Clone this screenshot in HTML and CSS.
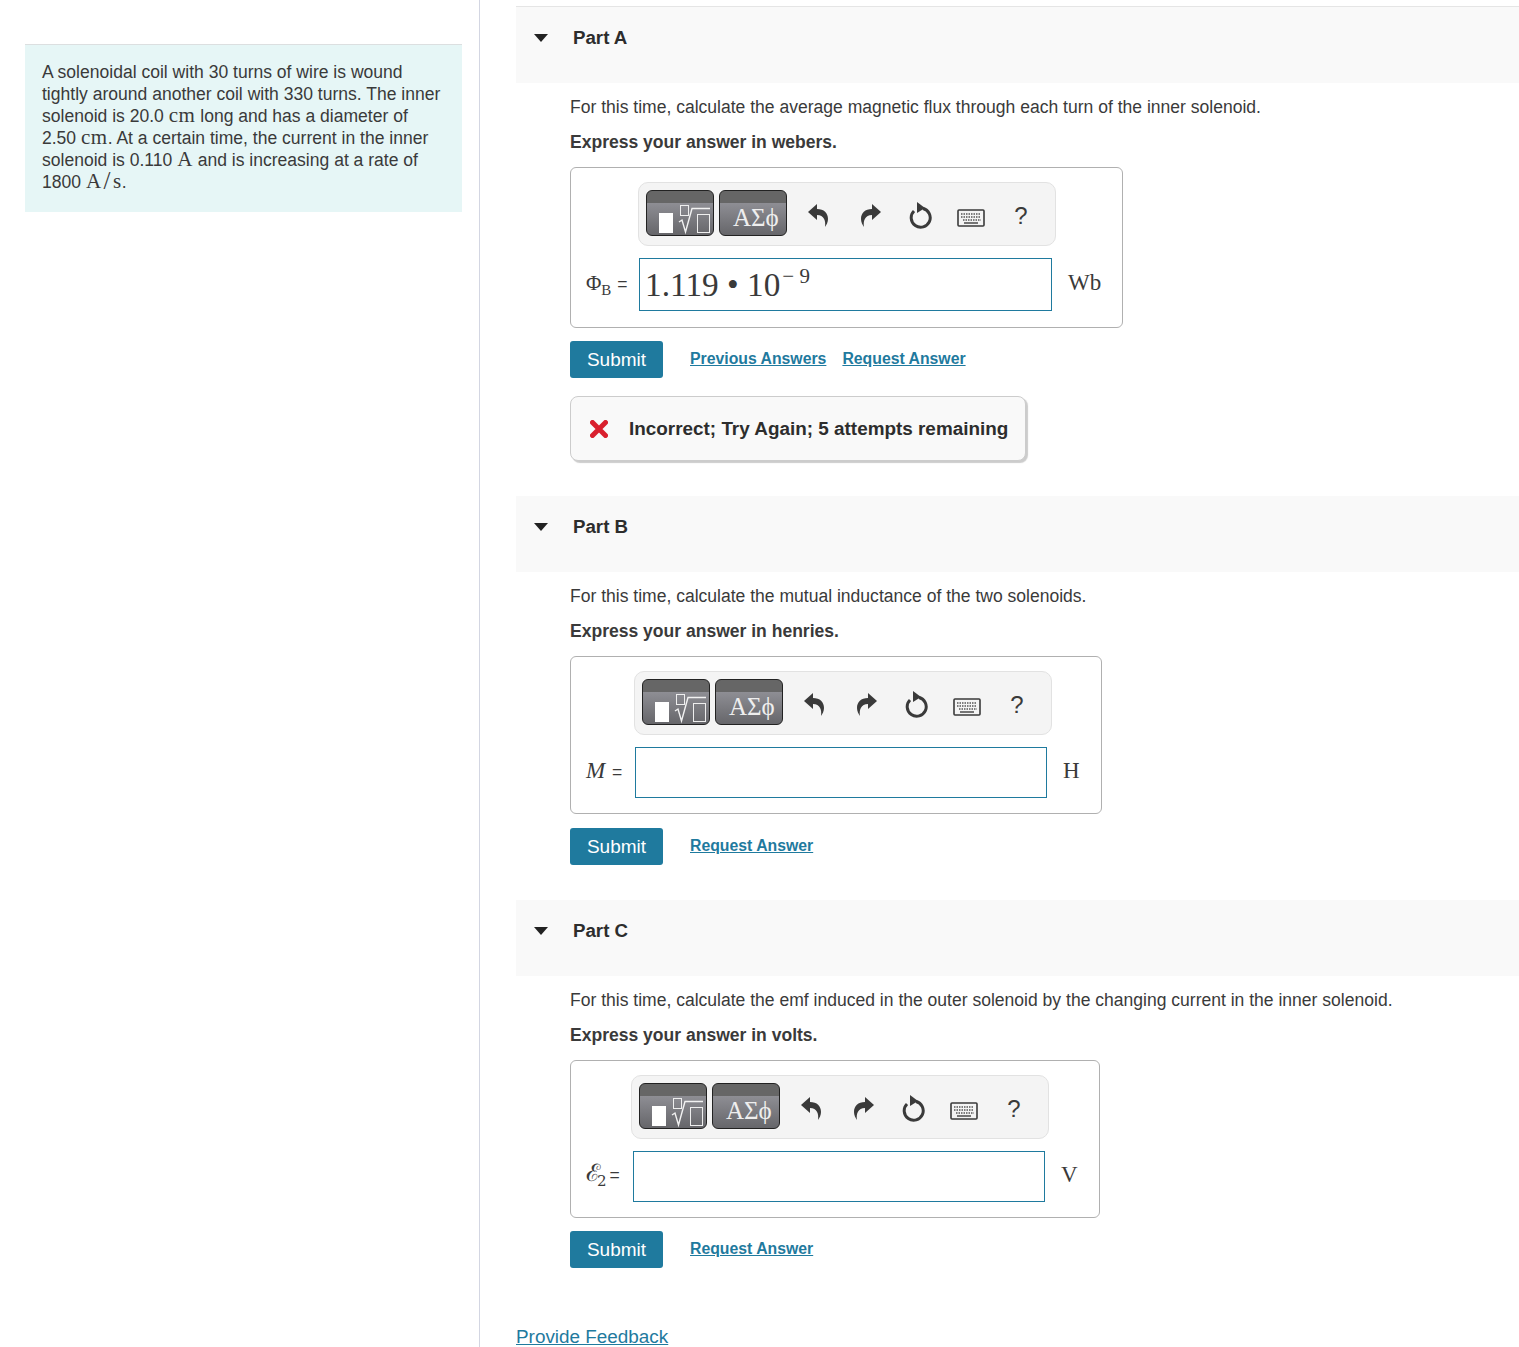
FILE: index.html
```html
<!DOCTYPE html>
<html lang="en">
<head>
    <meta charset="UTF-8">
    <meta name="viewport" content="width=device-width, initial-scale=1.0">
    <title>Solenoid Problem</title>
    <link rel="stylesheet" href="styles.css">
</head>
<body>
    <svg class="icon-defs" aria-hidden="true">
        <symbol id="icon-template" viewBox="0 0 68 46">
            <rect x="13" y="23" width="14" height="20" fill="#fff"/>
            <rect x="34.5" y="15.5" width="8" height="10" fill="none" stroke="#eee"/>
            <path d="M33 32 L36 30 L39.5 42 L46 18.5 H64" fill="none" stroke="#f2f2f2" stroke-width="1.4"/>
            <rect x="51.5" y="24.5" width="12" height="18" fill="none" stroke="#eee"/>
        </symbol>
        <symbol id="icon-undo" viewBox="0 0 20 24">
            <path d="M0 9 L9 1 V6 C16 6 20 10 20 16 C20 19 18.5 22 17 24 C18 18 16 12 9 12 V17 Z" fill="#3a3a3a"/>
        </symbol>
        <symbol id="icon-redo" viewBox="0 0 20 24">
            <path d="M20 9 L11 1 V6 C4 6 0 10 0 16 C0 19 1.5 22 3 24 C2 18 4 12 11 12 V17 Z" fill="#3a3a3a"/>
        </symbol>
        <symbol id="icon-reset" viewBox="0 0 24 28">
            <path d="M6 9 A9.5 9.5 0 1 0 15 6.5" fill="none" stroke="#3a3a3a" stroke-width="3"/>
            <path d="M9 0 L17 6 L9 11 Z" fill="#3a3a3a"/>
        </symbol>
        <symbol id="icon-keyboard" viewBox="0 0 28 18">
            <rect x="1" y="1" width="26" height="16" rx="1" fill="#f4f4f4" stroke="#3a3a3a" stroke-width="1.6"/>
            <path d="M4 5 H24 M4 8 H24 M6 11 H24" stroke="#555" stroke-width="1.6" stroke-dasharray="1.5 1"/>
            <path d="M7 14 H21" stroke="#555" stroke-width="1.6"/>
        </symbol>
    </svg>

    <div class="page">
        <aside class="sidebar">
            <div class="callout">
                A solenoidal coil with 30 turns of wire is wound tightly around another coil with 330 turns. The inner solenoid is 20.0 <span class="math">cm</span> long and has a diameter of 2.50 <span class="math">cm</span>. At a certain time, the current in the inner solenoid is 0.110 <span class="math">A</span> and is increasing at a rate of 1800 <span class="math">A<span class="slash">/</span>s</span>.
            </div>
        </aside>

        <main class="content">
            <section class="part part-first">
                <h2 class="part-header"><span class="caret"></span>Part A</h2>
                <div class="part-body">
                    <p class="prompt">For this time, calculate the average magnetic flux through each turn of the inner solenoid.</p>
                    <p class="instruction">Express your answer in webers.</p>
                    <div class="answer-box">
                        <div class="toolbar">
                            <span class="tpl-btn"><svg class="tpl-icon"><use href="#icon-template"/></svg></span>
                            <span class="tpl-btn tpl-greek">ΑΣϕ</span>
                            <span class="tool tool-first"><svg class="ico-arrow"><use href="#icon-undo"/></svg></span>
                            <span class="tool"><svg class="ico-arrow"><use href="#icon-redo"/></svg></span>
                            <span class="tool"><svg class="ico-reset"><use href="#icon-reset"/></svg></span>
                            <span class="tool"><svg class="ico-keyboard"><use href="#icon-keyboard"/></svg></span>
                            <span class="tool tool-help">?</span>
                        </div>
                        <div class="answer-row answer-row-tall">
                            <span class="answer-label label-a"><span class="math-label">Φ<sub>B</sub></span> =</span>
                            <div class="answer-input answer-input-wide"><span class="answer-value">1.119 • 10<sup>− 9</sup></span></div>
                            <span class="answer-unit">Wb</span>
                        </div>
                    </div>
                    <div class="actions">
                        <button class="submit" type="button">Submit</button>
                        <a class="action-link" href="#">Previous Answers</a>
                        <a class="action-link" href="#">Request Answer</a>
                    </div>
                    <div class="feedback">
                        <svg class="feedback-icon" viewBox="0 0 18 18"><path d="M2.5 2.5 L15.5 15.5 M15.5 2.5 L2.5 15.5" stroke="#d9202e" stroke-width="5" stroke-linecap="round"/></svg>
                        Incorrect; Try Again; 5 attempts remaining
                    </div>
                </div>
            </section>

            <section class="part">
                <h2 class="part-header"><span class="caret"></span>Part B</h2>
                <div class="part-body">
                    <p class="prompt">For this time, calculate the mutual inductance of the two solenoids.</p>
                    <p class="instruction">Express your answer in henries.</p>
                    <div class="answer-box">
                        <div class="toolbar toolbar-b">
                            <span class="tpl-btn"><svg class="tpl-icon"><use href="#icon-template"/></svg></span>
                            <span class="tpl-btn tpl-greek">ΑΣϕ</span>
                            <span class="tool tool-first"><svg class="ico-arrow"><use href="#icon-undo"/></svg></span>
                            <span class="tool"><svg class="ico-arrow"><use href="#icon-redo"/></svg></span>
                            <span class="tool"><svg class="ico-reset"><use href="#icon-reset"/></svg></span>
                            <span class="tool"><svg class="ico-keyboard"><use href="#icon-keyboard"/></svg></span>
                            <span class="tool tool-help">?</span>
                        </div>
                        <div class="answer-row">
                            <span class="answer-label label-b"><i class="math-label math-m">M</i> =</span>
                            <div class="answer-input"></div>
                            <span class="answer-unit">H</span>
                        </div>
                    </div>
                    <div class="actions actions-b">
                        <button class="submit" type="button">Submit</button>
                        <a class="action-link" href="#">Request Answer</a>
                    </div>
                </div>
            </section>

            <section class="part">
                <h2 class="part-header"><span class="caret"></span>Part C</h2>
                <div class="part-body">
                    <p class="prompt">For this time, calculate the emf induced in the outer solenoid by the changing current in the inner solenoid.</p>
                    <p class="instruction">Express your answer in volts.</p>
                    <div class="answer-box">
                        <div class="toolbar toolbar-c">
                            <span class="tpl-btn"><svg class="tpl-icon"><use href="#icon-template"/></svg></span>
                            <span class="tpl-btn tpl-greek">ΑΣϕ</span>
                            <span class="tool tool-first"><svg class="ico-arrow"><use href="#icon-undo"/></svg></span>
                            <span class="tool"><svg class="ico-arrow"><use href="#icon-redo"/></svg></span>
                            <span class="tool"><svg class="ico-reset"><use href="#icon-reset"/></svg></span>
                            <span class="tool"><svg class="ico-keyboard"><use href="#icon-keyboard"/></svg></span>
                            <span class="tool tool-help">?</span>
                        </div>
                        <div class="answer-row">
                            <span class="answer-label label-c"><span class="math-label math-script">ℰ<sub>2</sub></span> =</span>
                            <div class="answer-input"></div>
                            <span class="answer-unit">V</span>
                        </div>
                    </div>
                    <div class="actions">
                        <button class="submit" type="button">Submit</button>
                        <a class="action-link" href="#">Request Answer</a>
                    </div>
                </div>
            </section>

            <a class="provide-feedback" href="#">Provide Feedback</a>
        </main>
    </div>
</body>
</html>
```

FILE: styles.css
```css
body {
    margin: 0;
    font-family: "Liberation Sans", Arial, sans-serif;
    font-size: 17.55px;
    color: #3a3a3a;
    background-color: #fff;
}

.icon-defs {
    display: none;
}

.page {
    display: grid;
    grid-template-columns: 480px 1fr;
    height: 1347px;
    overflow: hidden;
}

.sidebar {
    border-right: 1px solid #d3d6e2;
}

.callout {
    margin: 44px 17px 0 25px;
    padding: 16px 17px 19px;
    border-top: 1px solid #dcdfe0;
    background-color: #e6f6f6;
    line-height: 22px;
}

.math {
    font-family: "Liberation Serif", "Times New Roman", serif;
    font-size: 21px;
    line-height: 0;
    letter-spacing: 0.5px;
}

.slash {
    margin: 0 2px;
    font-size: 25px;
    line-height: 0;
    vertical-align: -1px;
}

.content {
    padding: 6px 0 0 36px;
}

.part {
    margin-bottom: 35px;
}

.part-first .part-header {
    border-top: 1px solid #e5e5e5;
    height: 77px;
}

.part-header {
    display: flex;
    align-items: flex-start;
    height: 76px;
    box-sizing: border-box;
    margin: 0;
    padding-top: 20px;
    padding-left: 18px;
    font-size: 18.7px;
    line-height: 21px;
    font-weight: bold;
    color: #2d2d2d;
    background-color: #f9f9f9;
}

.caret {
    width: 0;
    height: 0;
    margin: 7px 25px 0 0;
    border-left: 7.5px solid transparent;
    border-right: 7.5px solid transparent;
    border-top: 8px solid #222;
}

.part-body {
    padding-left: 54px;
}

.prompt {
    margin: 13px 0 0;
    line-height: 22px;
}

.instruction {
    margin: 13px 0 14px;
    line-height: 22px;
    font-weight: bold;
}

.answer-box {
    display: inline-block;
    vertical-align: top;
    padding: 14px 21px 15px 15px;
    border: 1px solid #b0b0b0;
    border-radius: 6px;
}

.toolbar {
    display: flex;
    align-items: flex-start;
    box-sizing: border-box;
    width: 418px;
    height: 64px;
    margin-left: 52px;
    padding: 7px;
    border: 1px solid #e2e2e2;
    border-radius: 10px;
    background-color: #f4f4f4;
}

.toolbar-b {
    margin-left: 48px;
}

.toolbar-c {
    margin-left: 45px;
}

.tpl-btn {
    box-sizing: border-box;
    display: block;
    flex: none;
    width: 68px;
    height: 46px;
    border: 1px solid #222;
    border-radius: 6px;
    background: linear-gradient(#666 0, #666 12px, #8e8e94 12px, #66666a 100%);
}

.tpl-icon {
    display: block;
    width: 68px;
    height: 46px;
    margin: -1px;
}

.tpl-greek {
    margin-left: 5px;
    padding: 12px 0 0 13px;
    font-family: "Liberation Serif", "Times New Roman", serif;
    font-size: 25px;
    line-height: 30px;
    color: #eee;
}

.tool {
    display: flex;
    flex: none;
    justify-content: center;
    align-items: center;
    width: 50px;
    height: 50px;
    box-sizing: border-box;
}

.tool-first {
    margin: 0 3px 0 6px;
}

.tool-help {
    padding-top: 2px;
    font-size: 24px;
}

.ico-arrow {
    width: 20px;
    height: 24px;
}

.ico-reset {
    width: 24px;
    height: 28px;
    margin: 1px 2px 0 0;
}

.ico-keyboard {
    width: 28px;
    height: 18px;
    margin-top: 6px;
}

.answer-row {
    display: flex;
    align-items: center;
    margin-top: 12px;
}

.answer-row-tall {
    margin-bottom: 1px;
}

.answer-label {
    flex: none;
    padding-bottom: 3px;
    white-space: nowrap;
}

.label-a {
    width: 53px;
}

.label-b {
    width: 49px;
}

.label-c {
    width: 47px;
}

.math-label {
    margin-right: 1px;
    font-family: "Liberation Serif", "Times New Roman", serif;
    font-size: 21px;
}

.math-label sub {
    font-size: 15px;
    line-height: 0;
}

.math-m {
    margin-right: 2px;
    font-size: 23px;
}

.math-script {
    margin-right: -2px;
    font-family: "DejaVu Serif", "Liberation Serif", serif;
    font-size: 24px;
    line-height: 0;
}

.math-script sub {
    margin-left: -3px;
}

.answer-input {
    box-sizing: border-box;
    width: 412px;
    min-height: 51px;
    border: 1px solid #1f7a9e;
    font-family: "Liberation Serif", "Times New Roman", serif;
}

.answer-input-wide {
    width: 413px;
}

.answer-value {
    display: block;
    padding-left: 5px;
    padding-top: 1px;
    font-size: 33.3px;
    line-height: 50px;
    white-space: nowrap;
}

.answer-value sup {
    margin-left: 2px;
    font-size: 21px;
    line-height: 0;
    vertical-align: 13px;
}

.answer-unit {
    margin-left: 16px;
    padding-bottom: 3px;
    font-family: "Liberation Serif", "Times New Roman", serif;
    font-size: 23px;
}

.actions {
    display: flex;
    align-items: flex-start;
    gap: 16px;
    margin-top: 13px;
}

.actions-b {
    margin-top: 14px;
}

.submit {
    width: 93px;
    height: 37px;
    margin-right: 11px;
    padding: 0;
    border: none;
    border-radius: 3px;
    font-family: inherit;
    font-size: 19px;
    color: #fff;
    background-color: #1f7a9e;
}

.action-link {
    padding-top: 8px;
    font-size: 15.8px;
    line-height: 19px;
    font-weight: bold;
    color: #1f7a9e;
}

.feedback {
    display: inline-flex;
    align-items: center;
    box-sizing: border-box;
    width: 456px;
    height: 65px;
    margin-top: 18px;
    padding-left: 19px;
    border: 1px solid #ccc;
    border-radius: 8px;
    font-weight: bold;
    font-size: 18.9px;
    color: #2d2d2d;
    background-color: #f9f9f9;
    box-shadow: 2px 2px 1px #ccc;
}

.feedback-icon {
    width: 18px;
    height: 18px;
    margin-right: 21px;
}

.provide-feedback {
    display: block;
    margin-top: 57px;
    font-size: 18.9px;
    line-height: 23px;
    color: #1f7a9e;
}
```
